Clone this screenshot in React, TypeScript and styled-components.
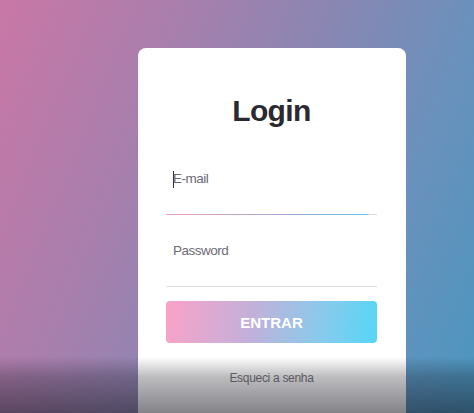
import styled, { createGlobalStyle } from "styled-components";

const GlobalStyle = createGlobalStyle`
  html, body {
    margin: 0;
    padding: 0;
  }
  body {
    font-family: "Liberation Sans", Arial, sans-serif;
  }
`;

export default function App() {
  return (
    <>
      <GlobalStyle />
      <Page>
        <Card>
          <Title>Login</Title>
          <Field>
            <Caret />
            <Input type="email" placeholder="E-mail" $active />
          </Field>
          <Field>
            <Input type="password" placeholder="Password" />
          </Field>
          <SubmitButton type="button">ENTRAR</SubmitButton>
          <ForgotLink href="#">Esqueci a senha</ForgotLink>
        </Card>
        <BottomShade />
      </Page>
    </>
  );
}

const Page = styled.div`
  position: relative;
  width: 474px;
  height: 413px;
  overflow: hidden;
  box-sizing: border-box;
  padding: 48px 0 0 138px;
  background: linear-gradient(
    112deg,
    #c977a6 0%,
    #a77fad 30%,
    #8a86b2 52%,
    #6a91bc 75%,
    #4a96bf 100%
  );
`;

const Card = styled.div`
  width: 268px;
  height: 400px;
  box-sizing: border-box;
  padding: 46px 29px 0 28px;
  background: #fff;
  border-radius: 8px;
  display: flex;
  flex-direction: column;
`;

const Title = styled.h1`
  margin: 0 0 15px;
  font-size: 30px;
  line-height: 34px;
  font-weight: 700;
  text-align: center;
  color: #2a2a30;
  letter-spacing: -0.6px;
`;

const Field = styled.div`
  position: relative;
`;

const Input = styled.input<{ $active?: boolean }>`
  display: block;
  width: 100%;
  height: 72px;
  box-sizing: border-box;
  padding: 0 7px 1px;
  border: none;
  outline: none;
  font-family: "Liberation Sans", Arial, sans-serif;
  font-size: 13.5px;
  letter-spacing: -0.5px;
  color: #333;
  background-color: #fff;
  background-repeat: no-repeat;
  background-position: left bottom, left bottom;
  background-size: ${({ $active }) => ($active ? "96% 1px" : "0 1px")}, 100% 1px;
  background-image: linear-gradient(to right, #f2a0c0, #a9a6cf 55%, #5ec8e8),
    linear-gradient(#dcdcdf, #dcdcdf);

  &::placeholder {
    color: #6c6a74;
  }
`;

const Caret = styled.span`
  position: absolute;
  left: 7px;
  top: 28px;
  width: 1px;
  height: 17px;
  background: #333;
`;

const SubmitButton = styled.button`
  margin-top: 14px;
  height: 42px;
  border: none;
  border-radius: 4px;
  background: linear-gradient(100deg, #fba2c8 0%, #c3b0da 40%, #8ec8ea 70%, #55d7f7 100%);
  color: #fff;
  font-family: "Liberation Sans", Arial, sans-serif;
  font-size: 15px;
  font-weight: 700;
  cursor: pointer;
`;

const ForgotLink = styled.a`
  margin-top: 28px;
  align-self: center;
  font-size: 12px;
  letter-spacing: -0.3px;
  color: #77767c;
  text-decoration: none;
`;

const BottomShade = styled.div`
  position: absolute;
  left: 0;
  right: 0;
  bottom: 0;
  height: 56px;
  background: linear-gradient(
    to bottom,
    rgba(20, 20, 30, 0) 0%,
    rgba(20, 20, 30, 0.28) 35%,
    rgba(20, 20, 30, 0.53) 100%
  );
  pointer-events: none;
`;
